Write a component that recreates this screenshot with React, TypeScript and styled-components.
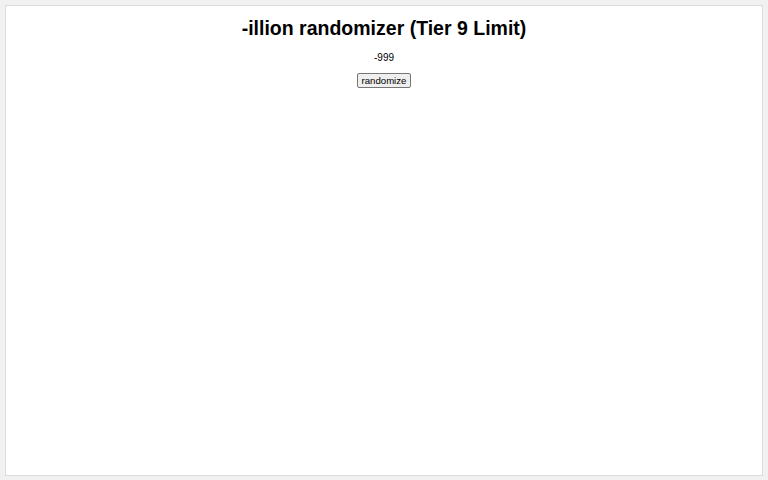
import React, { useState } from 'react'
import styled, { createGlobalStyle } from 'styled-components'

const GlobalStyle = createGlobalStyle`
  html, body {
    margin: 0;
    padding: 0;
    height: 100%;
    background: #f1f1f1;
  }
  #root {
    height: 100%;
  }
`

const Page = styled.div`
  box-sizing: border-box;
  height: 480px;
  padding: 5px 5px 4px 5px;
  font-family: 'Liberation Sans', Arial, sans-serif;
`

const Panel = styled.div`
  box-sizing: border-box;
  height: 100%;
  background: #ffffff;
  border: 1px solid #dcdcdc;
  display: flex;
  flex-direction: column;
  align-items: center;
  padding-top: 12px;
`

const Title = styled.h1`
  margin: 0;
  font-size: 19.5px;
  font-weight: bold;
  color: #000;
  line-height: 20px;
`

const Result = styled.p`
  margin: 14px 0 0;
  font-size: 10px;
  color: #000;
  line-height: 12px;
`

const Button = styled.button`
  margin-top: 9px;
  font-family: 'Liberation Sans', Arial, sans-serif;
  font-size: 9.6px;
  line-height: 12px;
  padding: 0 4px;
  height: 15px;
  color: #000;
  background: #efefef;
  border: 1px solid #767676;
  border-radius: 2px;
`

const App: React.FC = () => {
  const [value, setValue] = useState('-999')

  const randomize = () => {
    setValue(String(Math.floor(Math.random() * 1999) - 999))
  }

  return (
    <>
      <GlobalStyle />
      <Page>
        <Panel>
          <Title>-illion randomizer (Tier 9 Limit)</Title>
          <Result>{value}</Result>
          <Button onClick={randomize}>randomize</Button>
        </Panel>
      </Page>
    </>
  )
}

export default App
